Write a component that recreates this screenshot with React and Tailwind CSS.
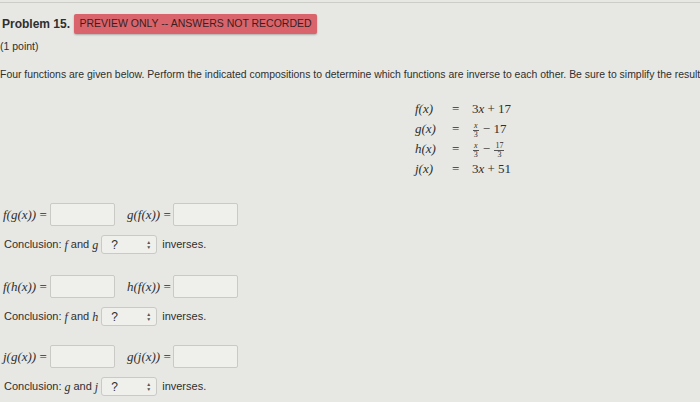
import React from "react";

const serif = "font-['Liberation_Serif',serif]";

function Frac({ num, den }) {
  return (
    <span className="inline-flex flex-col items-center align-middle text-[8px] leading-[8px] mx-[1px]">
      <span className="border-b border-[#555] px-[1px]">{num}</span>
      <span>{den}</span>
    </span>
  );
}

function MathLabel({ children }) {
  return <span className={`${serif} italic text-[13px]`}>{children}</span>;
}

function AnswerBox({ w = "w-[65px]" }) {
  return (
    <div
      className={`${w} h-[23px] bg-[#eff0ec] border border-[#c9cac5] rounded-[2px]`}
    />
  );
}

function Block({ left, right, a, b, mt }) {
  return (
    <div className={mt}>
      <div className="flex items-center h-[24px]">
        <div className="w-[50px] pl-[3px] whitespace-nowrap">
          <MathLabel>{left}</MathLabel>
          <span className={`${serif} text-[13px]`}> =</span>
        </div>
        <AnswerBox />
        <div className="w-[58px] pl-[12px] whitespace-nowrap">
          <MathLabel>{right}</MathLabel>
          <span className={`${serif} text-[13px]`}> =</span>
        </div>
        <AnswerBox />
      </div>
      <div className="flex items-center mt-[9px] h-[19px] text-[11px] pl-[4px]">
        <span>Conclusion:</span>
        <span className={`${serif} italic text-[12px] mx-[3px]`}>{a}</span>
        <span>and</span>
        <span className={`${serif} italic text-[12px] mx-[3px]`}>{b}</span>
        <div className="w-[56px] h-[19px] bg-[#eff0ec] border border-[#c9cac5] rounded-[3px] flex items-center justify-between px-[9px] text-[12px]">
          <span>?</span>
          <span className="flex flex-col items-center text-[5px] leading-[5px] text-[#555] -mr-[4px]">
            <span>▲</span>
            <span>▼</span>
          </span>
        </div>
        <span className="ml-[5px]">inverses.</span>
      </div>
    </div>
  );
}

export default function App() {
  const rows = [
    ["f(x)", <>3<i>x</i> + 17</>],
    ["g(x)", <><Frac num={<i>x</i>} den="3" /> − 17</>],
    ["h(x)", <><Frac num={<i>x</i>} den="3" /> − <Frac num="17" den="3" /></>],
    ["j(x)", <>3<i>x</i> + 51</>],
  ];

  return (
    <div className="w-[700px] h-[402px] overflow-hidden bg-[#e7e8e3] font-['Liberation_Sans',Arial,sans-serif] text-[#2f2f2f]">
      <div className="h-[3px] border-b border-[#cdcdc8]" />

      <div className="flex items-center mt-[11px] h-[20px]">
        <span className="font-bold text-[12px] pl-[2px]">Problem 15.</span>
        <div className="ml-[4px] w-[243px] h-[20px] bg-[#d9646b] rounded-[2px] shadow-[0_1px_2px_rgba(0,0,0,0.25)] flex items-center justify-center text-[10.5px] text-[#3a1f22]">
          PREVIEW ONLY -- ANSWERS NOT RECORDED
        </div>
      </div>

      <div className="mt-[4px] text-[10.5px] leading-[16px]">(1 point)</div>

      <div className="mt-[14px] text-[10.45px] leading-[14px] whitespace-nowrap overflow-hidden">
        Four functions are given below. Perform the indicated compositions to
        determine which functions are inverse to each other. Be sure to simplify
        the results.
      </div>

      <div className={`ml-[415px] mt-[17px] ${serif} text-[13px]`}>
        {rows.map(([name, rhs], i) => (
          <div key={i} className="flex items-center h-[20px]">
            <span className="w-[37px] italic">{name}</span>
            <span className="w-[20px]">=</span>
            <span>{rhs}</span>
          </div>
        ))}
      </div>

      <Block left="f(g(x))" right="g(f(x))" a="f" b="g" mt="mt-[23px]" />
      <Block left="f(h(x))" right="h(f(x))" a="f" b="h" mt="mt-[20px]" />
      <Block left="j(g(x))" right="g(j(x))" a="g" b="j" mt="mt-[18px]" />
    </div>
  );
}
